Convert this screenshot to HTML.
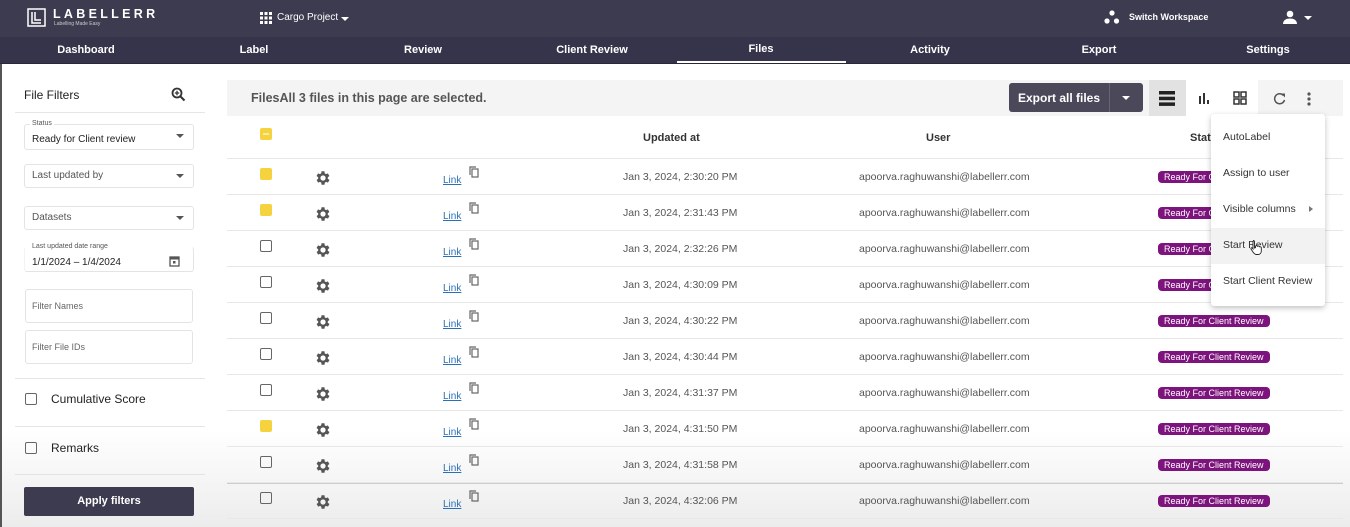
<!DOCTYPE html>
<html><head><meta charset="utf-8"><style>
*{box-sizing:border-box;margin:0;padding:0}
body{width:1350px;height:527px;overflow:hidden;position:relative;background:#fff;font-family:"Liberation Sans",Arial,sans-serif;color:#333}
.a{position:absolute}
.top{left:0;top:0;width:1350px;height:37px;background:#3d3b4f}
.nav{left:0;top:37px;width:1350px;height:27px;background:#36344a;border-bottom:1px solid #2a2838}
.nav span{position:absolute;top:7px;color:#fff;font-size:11px;font-weight:bold;transform:translateX(-50%)}
.field{border:1px solid #e4e4e4;border-radius:3px;background:#fff;font-size:10px;color:#555}
.caret{width:0;height:0;border-left:4px solid transparent;border-right:4px solid transparent;border-top:4px solid #555}
.row{left:227px;width:1116px;height:36px;border-bottom:1px solid #e8e8e8}
.cb{width:12px;height:12px;border:1.6px solid #666;border-radius:2px}
.cby{width:12px;height:12px;background:#f5d33f;border-radius:2px}
.link{font-size:10px;color:#2a6fb8;text-decoration:underline}
.d{font-size:10.5px;color:#555}
.badge{background:#7d137d;color:#fff;font-size:9px;border-radius:4px;padding:1px 6px;height:12px;line-height:10px;white-space:nowrap}
.mi{left:1223px;font-size:10.5px;color:#333}
</style></head><body>
<!-- bottom fade (behind content) -->
<div class="a" style="left:0;top:430px;width:1350px;height:97px;background:linear-gradient(#ffffff,#ececec)"></div>
<div class="a" style="left:0;top:63px;width:2px;height:464px;background:#555"></div>
<div class="a top"></div>
<svg class="a" style="left:27px;top:8px" width="19" height="19" viewBox="0 0 19 19"><rect x="1" y="1" width="17" height="17" fill="none" stroke="#fff" stroke-width="1.5"/><path d="M5 4v11h9M8 4v8h6" fill="none" stroke="#fff" stroke-width="1.5"/></svg>
<div class="a" style="left:53px;top:7px;color:#fff;font-size:12.5px;font-weight:bold;letter-spacing:3.3px">LABELLERR</div>
<div class="a" style="left:54px;top:21px;color:#ccc;font-size:5px">Labelling Made Easy</div>
<svg class="a" style="left:260px;top:12px" width="12" height="12"><g fill="#fff"><rect x="0" y="0" width="3" height="3"/><rect x="4.5" y="0" width="3" height="3"/><rect x="9" y="0" width="3" height="3"/><rect x="0" y="4.5" width="3" height="3"/><rect x="4.5" y="4.5" width="3" height="3"/><rect x="9" y="4.5" width="3" height="3"/><rect x="0" y="9" width="3" height="3"/><rect x="4.5" y="9" width="3" height="3"/><rect x="9" y="9" width="3" height="3"/></g></svg>
<div class="a" style="left:277px;top:12px;color:#fff;font-size:10px">Cargo Project</div>
<div class="a caret" style="left:341px;top:17px;border-top-color:#fff"></div>
<svg class="a" style="left:1104px;top:10px" width="16" height="15"><g fill="#fff"><circle cx="8" cy="3" r="2.6"/><circle cx="3" cy="11" r="2.6"/><circle cx="12.5" cy="11" r="2.6"/></g></svg>
<div class="a" style="left:1129px;top:12px;color:#fff;font-size:9px;font-weight:bold">Switch Workspace</div>
<svg class="a" style="left:1283px;top:10px" width="14" height="14"><circle cx="7" cy="4" r="3.3" fill="#fff"/><path d="M0 14c0-4 3.5-5.5 7-5.5s7 1.5 7 5.5z" fill="#fff"/></svg>
<div class="a caret" style="left:1304px;top:16px;border-top-color:#fff"></div>
<div class="a nav">
<span style="left:86px">Dashboard</span><span style="left:254px">Label</span><span style="left:423px">Review</span><span style="left:592px">Client Review</span><span style="left:761px;top:6px">Files</span><span style="left:930px">Activity</span><span style="left:1099px">Export</span><span style="left:1268px">Settings</span>
</div>
<div class="a" style="left:677px;top:61px;width:169px;height:2px;background:#fff"></div>

<!-- sidebar -->
<div class="a" style="left:24px;top:88px;font-size:12px;color:#222">File Filters</div>
<svg class="a" style="left:171px;top:87px" width="15" height="15"><circle cx="6" cy="6" r="4.5" fill="none" stroke="#333" stroke-width="1.8"/><path d="M9.5 9.5l4 4" stroke="#333" stroke-width="2"/><path d="M6 3.8v4.4M3.8 6h4.4" stroke="#333" stroke-width="1.3"/></svg>
<div class="a" style="left:15px;top:112px;width:190px;height:1px;background:#e6e6e6"></div>
<div class="a field" style="left:24px;top:124px;width:170px;height:26px"></div>
<div class="a" style="left:30px;top:120px;font-size:7px;color:#555;background:#fff;padding:0 2px">Status</div>
<div class="a" style="left:32px;top:134px;font-size:10px;color:#222">Ready for Client review</div>
<div class="a caret" style="left:176px;top:134px"></div>
<div class="a field" style="left:24px;top:164px;width:170px;height:24px"></div>
<div class="a" style="left:32px;top:170px;font-size:10px;color:#555">Last updated by</div>
<div class="a caret" style="left:176px;top:174px"></div>
<div class="a field" style="left:24px;top:206px;width:170px;height:24px"></div>
<div class="a" style="left:32px;top:212px;font-size:10px;color:#555">Datasets</div>
<div class="a caret" style="left:176px;top:216px"></div>
<div class="a field" style="left:24px;top:247px;width:170px;height:25px;border-top:none;border-left-color:#f3f3f3"></div>
<div class="a" style="left:32px;top:243px;font-size:7px;color:#555">Last updated date range</div>
<div class="a" style="left:32px;top:257px;font-size:10px;color:#222">1/1/2024 – 1/4/2024</div>
<svg class="a" style="left:169px;top:255px" width="11" height="12"><rect x="1" y="2" width="9" height="9" fill="none" stroke="#555" stroke-width="1.3"/><rect x="1" y="2" width="9" height="2.5" fill="#555"/><rect x="4" y="6" width="2.5" height="2.5" fill="#555"/></svg>
<div class="a field" style="left:25px;top:289px;width:168px;height:34px"></div>
<div class="a" style="left:32px;top:301px;font-size:9px;color:#666">Filter Names</div>
<div class="a field" style="left:25px;top:330px;width:168px;height:34px"></div>
<div class="a" style="left:32px;top:342px;font-size:9px;color:#666">Filter File IDs</div>
<div class="a" style="left:15px;top:378px;width:190px;height:1px;background:#e6e6e6"></div>
<div class="a cb" style="left:25px;top:393px"></div>
<div class="a" style="left:51px;top:392px;font-size:12px;color:#222">Cumulative Score</div>
<div class="a" style="left:15px;top:426px;width:190px;height:1px;background:#e6e6e6"></div>
<div class="a cb" style="left:25px;top:442px"></div>
<div class="a" style="left:51px;top:441px;font-size:12px;color:#222">Remarks</div>
<div class="a" style="left:15px;top:474px;width:190px;height:1px;background:#e3e3e3"></div>
<div class="a" style="left:24px;top:487px;width:170px;height:29px;background:#3d3b50;border-radius:2px;color:#fff;font-size:11px;font-weight:bold;text-align:center;line-height:29px">Apply filters</div>

<!-- toolbar -->
<div class="a" style="left:227px;top:80px;width:1116px;height:36px;background:#f4f4f4"></div>
<div class="a" style="left:251px;top:91px;font-size:12.5px;font-weight:bold;color:#555">FilesAll 3 files in this page are selected.</div>
<div class="a" style="left:1009px;top:83px;width:134px;height:29px;background:#4a4859;border-radius:3px"></div>
<div class="a" style="left:1018px;top:91px;color:#fff;font-size:12px;font-weight:bold">Export all files</div>
<div class="a" style="left:1109px;top:83px;width:1px;height:29px;background:#66647a"></div>
<div class="a caret" style="left:1122px;top:96px;border-top-color:#fff"></div>
<div class="a" style="left:1149px;top:80px;width:37px;height:36px;background:#e2e2e2"></div>
<div class="a" style="left:1186px;top:80px;width:72px;height:36px;background:#fff"></div>
<svg class="a" style="left:1159px;top:91px" width="16" height="15"><g fill="#222"><rect width="16" height="3.5"/><rect y="5.7" width="16" height="3.5"/><rect y="11.4" width="16" height="3.5"/></g></svg>
<svg class="a" style="left:1198px;top:93px" width="12" height="11"><g fill="#333"><rect x="1" y="3" width="2" height="8"/><rect x="5" y="0" width="2" height="11"/><rect x="9" y="7" width="2" height="4"/></g></svg>
<svg class="a" style="left:1233px;top:91px" width="14" height="14"><g fill="none" stroke="#333" stroke-width="1.5"><rect x="1" y="1" width="5" height="5"/><rect x="8" y="1" width="5" height="5"/><rect x="1" y="8" width="5" height="5"/><rect x="8" y="8" width="5" height="5"/></g></svg>
<svg class="a" style="left:1273px;top:92px" width="13" height="13"><path d="M10.5 3.5A5 5 0 1 0 11.5 8" fill="none" stroke="#555" stroke-width="1.5"/><path d="M8 1.5h4v4z" fill="#555"/></svg>
<svg class="a" style="left:1307px;top:92px" width="4" height="14"><g fill="#555"><circle cx="2" cy="2" r="1.6"/><circle cx="2" cy="7" r="1.6"/><circle cx="2" cy="12" r="1.6"/></g></svg>

<!-- header row -->
<div class="a row" style="top:117px;height:42px"></div>
<div class="a cby" style="left:260px;top:128px"><div style="margin:5px 3px;height:2px;background:#fff8"></div></div>
<div class="a" style="left:643px;top:132px;font-size:11px;font-weight:bold;color:#333">Updated at</div>
<div class="a" style="left:926px;top:132px;font-size:11px;font-weight:bold;color:#333">User</div>
<div class="a" style="left:1190px;top:132px;font-size:11px;font-weight:bold;color:#333">Status</div>

<div class="a row" style="top:159px"></div><div class="a row" style="top:195px"></div><div class="a row" style="top:231px"></div><div class="a row" style="top:267px"></div><div class="a row" style="top:303px"></div><div class="a row" style="top:339px"></div><div class="a row" style="top:375px"></div><div class="a row" style="top:411px"></div><div class="a row" style="top:447px"></div><div class="a row" style="top:483px;border-top:1px solid #ccc"></div>

<div class="a cby" style="left:260px;top:168px"></div>
<div class="a cby" style="left:260px;top:204px"></div>
<div class="a cb" style="left:260px;top:240px"></div>
<div class="a cb" style="left:260px;top:276px"></div>
<div class="a cb" style="left:260px;top:312px"></div>
<div class="a cb" style="left:260px;top:348px"></div>
<div class="a cb" style="left:260px;top:384px"></div>
<div class="a cby" style="left:260px;top:420px"></div>
<div class="a cb" style="left:260px;top:456px"></div>
<div class="a cb" style="left:260px;top:492px"></div>

<svg width="0" height="0" style="position:absolute"><defs><symbol id="g" viewBox="0 0 24 24"><path fill="#555" d="M19.4 13a7.5 7.5 0 0 0 0-2l2.1-1.6-2-3.5-2.5 1a7 7 0 0 0-1.7-1L15 3h-4l-.4 2.9a7 7 0 0 0-1.7 1l-2.5-1-2 3.5L6.6 11a7.5 7.5 0 0 0 0 2l-2.1 1.6 2 3.5 2.5-1a7 7 0 0 0 1.7 1L11 21h4l.4-2.9a7 7 0 0 0 1.7-1l2.5 1 2-3.5zM13 15.5a3.5 3.5 0 1 1 0-7 3.5 3.5 0 0 1 0 7z" transform="translate(-1 0)"/></symbol><symbol id="c" viewBox="0 0 10 12"><rect x="3" y="3" width="6" height="8" fill="none" stroke="#666" stroke-width="1.2"/><path d="M1 9V1h6" fill="none" stroke="#666" stroke-width="1.2"/></symbol></defs></svg>

<svg class="a" style="left:314px;top:169px" width="18" height="18"><use href="#g"/></svg>
<svg class="a" style="left:314px;top:205px" width="18" height="18"><use href="#g"/></svg>
<svg class="a" style="left:314px;top:241px" width="18" height="18"><use href="#g"/></svg>
<svg class="a" style="left:314px;top:277px" width="18" height="18"><use href="#g"/></svg>
<svg class="a" style="left:314px;top:313px" width="18" height="18"><use href="#g"/></svg>
<svg class="a" style="left:314px;top:349px" width="18" height="18"><use href="#g"/></svg>
<svg class="a" style="left:314px;top:385px" width="18" height="18"><use href="#g"/></svg>
<svg class="a" style="left:314px;top:421px" width="18" height="18"><use href="#g"/></svg>
<svg class="a" style="left:314px;top:457px" width="18" height="18"><use href="#g"/></svg>
<svg class="a" style="left:314px;top:493px" width="18" height="18"><use href="#g"/></svg>

<div class="a link" style="left:443px;top:175px">Link</div><svg class="a" style="left:469px;top:166px" width="10" height="12"><use href="#c"/></svg>
<div class="a link" style="left:443px;top:211px">Link</div><svg class="a" style="left:469px;top:202px" width="10" height="12"><use href="#c"/></svg>
<div class="a link" style="left:443px;top:247px">Link</div><svg class="a" style="left:469px;top:238px" width="10" height="12"><use href="#c"/></svg>
<div class="a link" style="left:443px;top:283px">Link</div><svg class="a" style="left:469px;top:274px" width="10" height="12"><use href="#c"/></svg>
<div class="a link" style="left:443px;top:319px">Link</div><svg class="a" style="left:469px;top:310px" width="10" height="12"><use href="#c"/></svg>
<div class="a link" style="left:443px;top:355px">Link</div><svg class="a" style="left:469px;top:346px" width="10" height="12"><use href="#c"/></svg>
<div class="a link" style="left:443px;top:391px">Link</div><svg class="a" style="left:469px;top:382px" width="10" height="12"><use href="#c"/></svg>
<div class="a link" style="left:443px;top:427px">Link</div><svg class="a" style="left:469px;top:418px" width="10" height="12"><use href="#c"/></svg>
<div class="a link" style="left:443px;top:463px">Link</div><svg class="a" style="left:469px;top:454px" width="10" height="12"><use href="#c"/></svg>
<div class="a link" style="left:443px;top:499px">Link</div><svg class="a" style="left:469px;top:490px" width="10" height="12"><use href="#c"/></svg>

<div class="a d" style="left:623px;top:171px">Jan 3, 2024, 2:30:20 PM</div>
<div class="a d" style="left:623px;top:207px">Jan 3, 2024, 2:31:43 PM</div>
<div class="a d" style="left:623px;top:243px">Jan 3, 2024, 2:32:26 PM</div>
<div class="a d" style="left:623px;top:279px">Jan 3, 2024, 4:30:09 PM</div>
<div class="a d" style="left:623px;top:315px">Jan 3, 2024, 4:30:22 PM</div>
<div class="a d" style="left:623px;top:351px">Jan 3, 2024, 4:30:44 PM</div>
<div class="a d" style="left:623px;top:387px">Jan 3, 2024, 4:31:37 PM</div>
<div class="a d" style="left:623px;top:423px">Jan 3, 2024, 4:31:50 PM</div>
<div class="a d" style="left:623px;top:459px">Jan 3, 2024, 4:31:58 PM</div>
<div class="a d" style="left:623px;top:495px">Jan 3, 2024, 4:32:06 PM</div>

<div class="a d" style="left:859px;top:171px">apoorva.raghuwanshi@labellerr.com</div>
<div class="a d" style="left:859px;top:207px">apoorva.raghuwanshi@labellerr.com</div>
<div class="a d" style="left:859px;top:243px">apoorva.raghuwanshi@labellerr.com</div>
<div class="a d" style="left:859px;top:279px">apoorva.raghuwanshi@labellerr.com</div>
<div class="a d" style="left:859px;top:315px">apoorva.raghuwanshi@labellerr.com</div>
<div class="a d" style="left:859px;top:351px">apoorva.raghuwanshi@labellerr.com</div>
<div class="a d" style="left:859px;top:387px">apoorva.raghuwanshi@labellerr.com</div>
<div class="a d" style="left:859px;top:423px">apoorva.raghuwanshi@labellerr.com</div>
<div class="a d" style="left:859px;top:459px">apoorva.raghuwanshi@labellerr.com</div>
<div class="a d" style="left:859px;top:495px">apoorva.raghuwanshi@labellerr.com</div>

<div class="a badge" style="left:1158px;top:171px">Ready For Client Review</div>
<div class="a badge" style="left:1158px;top:207px">Ready For Client Review</div>
<div class="a badge" style="left:1158px;top:243px">Ready For Client Review</div>
<div class="a badge" style="left:1158px;top:279px">Ready For Client Review</div>
<div class="a badge" style="left:1158px;top:315px">Ready For Client Review</div>
<div class="a badge" style="left:1158px;top:351px">Ready For Client Review</div>
<div class="a badge" style="left:1158px;top:387px">Ready For Client Review</div>
<div class="a badge" style="left:1158px;top:423px">Ready For Client Review</div>
<div class="a badge" style="left:1158px;top:459px">Ready For Client Review</div>
<div class="a badge" style="left:1158px;top:495px">Ready For Client Review</div>

<!-- menu -->
<div class="a" style="left:1211px;top:114px;width:114px;height:192px;background:#fff;border-radius:3px;box-shadow:0 2px 6px rgba(0,0,0,.25)"></div>
<div class="a" style="left:1211px;top:228px;width:114px;height:36px;background:#f2f2f2"></div>
<div class="a mi" style="top:131px">AutoLabel</div>
<div class="a mi" style="top:167px">Assign to user</div>
<div class="a mi" style="top:203px">Visible columns</div>
<div class="a" style="left:1309px;top:206px;width:0;height:0;border-top:3px solid transparent;border-bottom:3px solid transparent;border-left:4px solid #777"></div>
<div class="a mi" style="top:239px">Start Review</div>
<svg class="a" style="left:1250px;top:239px" width="13" height="17"><path d="M3 1.5c1 0 1.5.5 1.5 1.5v6l1-.3V7c.8-.6 1.8-.3 2 .3.8-.5 1.8-.2 2 .5.8-.3 1.8.2 1.8 1V12c0 2-1.2 3.5-3.3 3.5H6.5C5 15.5 4 14.5 3 13L1 10c-.4-.8.4-1.6 1.2-1L3 10V3c0-1 .2-1.5 0-1.5z" fill="#fff" stroke="#222" stroke-width=".9"/></svg>
<div class="a mi" style="top:275px">Start Client Review</div>
</body></html>
